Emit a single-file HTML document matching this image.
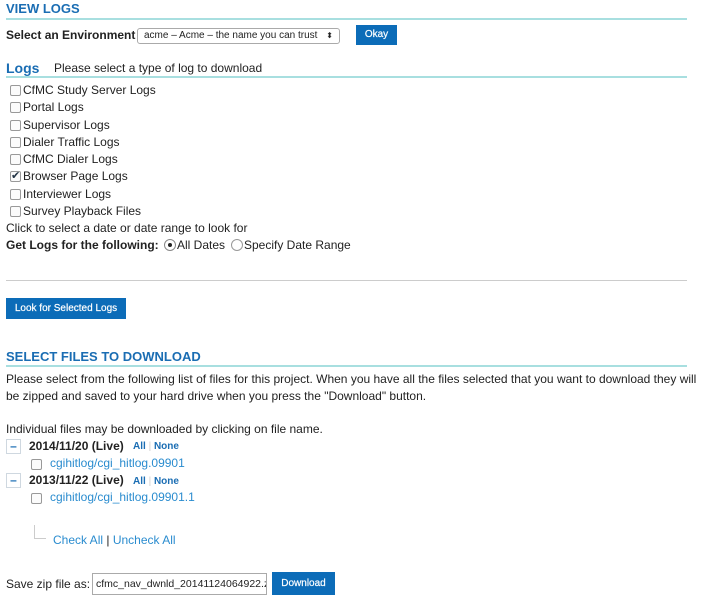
<!DOCTYPE html>
<html><head><style>
body{margin:0;width:705px;height:604px;background:#fff;font-family:"Liberation Sans",Arial,sans-serif;font-size:12px;color:#222;position:relative;overflow:hidden}
.a{position:absolute;white-space:nowrap;line-height:14px}
h{position:absolute;font-weight:bold;color:#1a6db3;font-size:13px;line-height:14px}
.ln{position:absolute;left:6px;width:681px;height:2px;background:#a8dfe0}
.cb{position:absolute;width:9px;height:9px;border:1px solid #999;border-radius:2px;background:#fbfbfb}
.btn{position:absolute;background:#0c6cb8;color:#fff;font-size:10px;text-align:center;-webkit-text-stroke:0.2px #fff}
.lk{color:#2a8ccf}
.sm{color:#1a6db3;font-weight:bold;font-size:10px}
.mn{position:absolute;width:13px;height:13px;border:1px solid #cfd8e0;color:#1a6db3;font-weight:bold;text-align:center;line-height:12px;font-size:12px}
</style></head><body>
<h style="left:6px;top:2px">VIEW LOGS</h>
<div class="ln" style="top:18px"></div>
<div class="a" style="left:6px;top:28px;font-weight:bold">Select an Environment</div>
<div class="a" style="left:137px;top:28px;border:1px solid #aaa;border-radius:3px;font-size:10px;line-height:14px;padding-left:6px;box-sizing:border-box;width:203px;height:16px">acme – Acme – the name you can trust<span style="position:absolute;right:6px;font-size:8px">⬍</span></div>
<div class="btn" style="left:356px;top:25px;width:41px;height:20px;line-height:20px">Okay</div>
<h style="left:6px;top:61px;font-size:14px">Logs</h>
<div class="a" style="left:54px;top:61px">Please select a type of log to download</div>
<div class="ln" style="top:76px"></div>
<div class="cb" style="left:10px;top:85px"></div><div class="a" style="left:23px;top:83px">CfMC Study Server Logs</div>
<div class="cb" style="left:10px;top:102px"></div><div class="a" style="left:23px;top:100px">Portal Logs</div>
<div class="cb" style="left:10px;top:120px"></div><div class="a" style="left:23px;top:118px">Supervisor Logs</div>
<div class="cb" style="left:10px;top:137px"></div><div class="a" style="left:23px;top:135px">Dialer Traffic Logs</div>
<div class="cb" style="left:10px;top:154px"></div><div class="a" style="left:23px;top:152px">CfMC Dialer Logs</div>
<div class="cb" style="left:10px;top:171px;font-size:11px;line-height:9px;color:#234">✔</div><div class="a" style="left:23px;top:169px">Browser Page Logs</div>
<div class="cb" style="left:10px;top:189px"></div><div class="a" style="left:23px;top:187px">Interviewer Logs</div>
<div class="cb" style="left:10px;top:206px"></div><div class="a" style="left:23px;top:204px">Survey Playback Files</div>
<div class="a" style="left:6px;top:221px">Click to select a date or date range to look for</div>
<div class="a" style="left:6px;top:238px"><b>Get Logs for the following:</b></div>
<div class="a" style="left:164px;top:239px;width:10px;height:10px;border:1px solid #888;border-radius:50%"><div style="position:absolute;left:3px;top:3px;width:4px;height:4px;border-radius:50%;background:#222"></div></div>
<div class="a" style="left:177px;top:238px">All Dates</div>
<div class="a" style="left:231px;top:239px;width:10px;height:10px;border:1px solid #999;border-radius:50%"></div>
<div class="a" style="left:244px;top:238px">Specify Date Range</div>
<div style="position:absolute;left:6px;top:280px;width:681px;height:1px;background:#ccc"></div>
<div class="btn" style="left:6px;top:298px;width:120px;height:21px;line-height:21px">Look for Selected Logs</div>
<h style="left:6px;top:350px">SELECT FILES TO DOWNLOAD</h>
<div class="ln" style="top:365px"></div>
<div class="a" style="left:6px;top:372px">Please select from the following list of files for this project. When you have all the files selected that you want to download they will</div>
<div class="a" style="left:6px;top:389px">be zipped and saved to your hard drive when you press the "Download" button.</div>
<div class="a" style="left:6px;top:422px">Individual files may be downloaded by clicking on file name.</div>
<div class="mn" style="left:6px;top:439px">–</div>
<div class="a" style="left:29px;top:439px;font-weight:bold">2014/11/20 (Live)</div>
<div class="a sm" style="left:133px;top:440px">All <span style="color:#ccc;font-weight:normal">|</span> None</div>
<div class="cb" style="left:31px;top:459px"></div><div class="a lk" style="left:50px;top:456px">cgihitlog/cgi_hitlog.09901</div>
<div class="mn" style="left:6px;top:473px">–</div>
<div class="a" style="left:29px;top:473px;font-weight:bold">2013/11/22 (Live)</div>
<div class="a sm" style="left:133px;top:475px">All <span style="color:#ccc;font-weight:normal">|</span> None</div>
<div class="cb" style="left:31px;top:493px"></div><div class="a lk" style="left:50px;top:490px">cgihitlog/cgi_hitlog.09901.1</div>
<div style="position:absolute;left:34px;top:525px;width:11px;height:13px;border-left:1px solid #ccc;border-bottom:1px solid #ccc"></div>
<div class="a" style="left:53px;top:533px"><span class="lk">Check All</span> | <span class="lk">Uncheck All</span></div>
<div class="a" style="left:6px;top:577px">Save zip file as:</div>
<div class="a" style="left:92px;top:573px;width:175px;height:22px;border:1px solid #aaa;box-sizing:border-box;line-height:20px;padding-left:3px;font-size:10.5px;overflow:hidden">cfmc_nav_dwnld_20141124064922.z</div>
<div class="btn" style="left:272px;top:572px;width:63px;height:23px;line-height:23px">Download</div>
</body></html>
